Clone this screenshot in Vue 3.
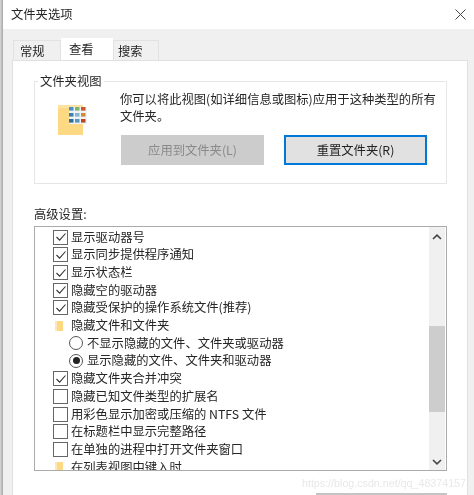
<script setup>
const rows = [
  { type: 'check', on: true, text: '显示驱动器号' },
  { type: 'check', on: true, text: '显示同步提供程序通知' },
  { type: 'check', on: true, text: '显示状态栏' },
  { type: 'check', on: true, text: '隐藏空的驱动器' },
  { type: 'check', on: true, text: '隐藏受保护的操作系统文件(推荐)' },
  { type: 'folder', text: '隐藏文件和文件夹' },
  { type: 'radio', on: false, text: '不显示隐藏的文件、文件夹或驱动器' },
  { type: 'radio', on: true, text: '显示隐藏的文件、文件夹和驱动器' },
  { type: 'check', on: true, text: '隐藏文件夹合并冲突' },
  { type: 'check', on: false, text: '隐藏已知文件类型的扩展名' },
  { type: 'check', on: false, text: '用彩色显示加密或压缩的 NTFS 文件' },
  { type: 'check', on: false, text: '在标题栏中显示完整路径' },
  { type: 'check', on: false, text: '在单独的进程中打开文件夹窗口' },
  { type: 'folder', text: '在列表视图中键入时' },
]
const tiles = [
  [0, 0, '#4a90c8'], [6, 0, '#7fb36a'], [12, 0, '#c8562e'],
  [0, 6, '#3f7fb0'], [6, 6, '#88b4d0'], [12, 6, '#d08a3a'],
  [0, 12, '#2f6f9f'], [6, 12, '#5a94b8'], [12, 12, '#b8482a'],
]
</script>

<template>
  <div class="dialog">
    <div class="edge"></div>
    <div class="main">
      <header class="titlebar">
        <span class="title">文件夹选项</span>
        <svg class="close" width="11" height="11" viewBox="0 0 11 11">
          <path d="M0.5 0.5L10.5 10.5M10.5 0.5L0.5 10.5" stroke="#444" stroke-width="1" fill="none" />
        </svg>
      </header>
      <div class="body">
        <nav class="tabs">
          <span class="tab t1">常规</span>
          <span class="tab active">查看</span>
          <span class="tab t3">搜索</span>
        </nav>
        <section class="panel">
          <fieldset class="group">
            <legend>文件夹视图</legend>
            <svg class="bigfolder" width="30" height="31" viewBox="0 0 30 31">
              <rect x="0" y="1" width="25" height="30" fill="#fcd982" />
              <rect x="0" y="1" width="25" height="3" fill="#fde3a0" />
              <rect x="11" y="3" width="18" height="17" fill="#eef3f6" />
              <rect
                v-for="(t, i) in tiles"
                :key="i"
                :x="11 + t[0]"
                :y="3 + t[1]"
                width="4.5"
                height="3.6"
                :fill="t[2]"
              />
            </svg>
            <div class="group-right">
              <p class="desc">你可以将此视图(如详细信息或图标)应用于这种类型的所有<br />文件夹。</p>
              <div class="buttons">
                <button class="btn disabled" type="button">应用到文件夹(L)</button>
                <button class="btn primary" type="button">重置文件夹(R)</button>
              </div>
            </div>
          </fieldset>
          <div class="adv-label">高级设置:</div>
          <div class="list">
            <div class="rows">
              <div v-for="r in rows" :key="r.text" class="row">
                <span v-if="r.type === 'check'" class="box">
                  <svg v-if="r.on" width="12" height="12" viewBox="0 0 12 12">
                    <path d="M1.5 6L4.6 9.2L10.5 2.5" stroke="#333" stroke-width="1.1" fill="none" />
                  </svg>
                </span>
                <span v-else-if="r.type === 'radio'" class="dot" :class="{ on: r.on }"></span>
                <svg v-else class="tree" width="8" height="10" viewBox="0 0 8 10">
                  <rect width="8" height="10" fill="#fcd982" />
                  <rect width="2" height="10" fill="#fde9b8" />
                </svg>
                <span class="label">{{ r.text }}</span>
              </div>
            </div>
            <div class="scrollbar">
              <svg class="arrow" width="10" height="6" viewBox="0 0 10 6">
                <path d="M1 5L5 1.2L9 5" stroke="#444" stroke-width="1.6" fill="none" />
              </svg>
              <div class="thumb"></div>
              <svg class="arrow down" width="10" height="6" viewBox="0 0 10 6">
                <path d="M1 1L5 4.8L9 1" stroke="#444" stroke-width="1.6" fill="none" />
              </svg>
            </div>
          </div>
          <div class="okbar"></div>
          <span class="watermark">https://blog.csdn.net/qq_48374157</span>
        </section>
      </div>
    </div>
  </div>
</template>

<style>
html, body { margin: 0; background: #fff; }
</style>

<style scoped>
.dialog {
  width: 474px;
  height: 495px;
  display: flex;
  overflow: hidden;
  font-family: "Noto Sans CJK SC", "Liberation Sans", sans-serif;
  font-size: 12.3px;
  color: #262626;
  filter: blur(0.35px);
}
.edge {
  width: 3px;
  flex: none;
  background: linear-gradient(90deg, #d8d8d8, #a8a8a8);
}
.main {
  flex: 1;
  display: flex;
  flex-direction: column;
  min-width: 0;
}
.titlebar {
  height: 29px;
  flex: none;
  display: flex;
  align-items: center;
  justify-content: space-between;
  padding: 0 8px;
  background: #fff;
}
.title { line-height: 29px; }
.body {
  flex: 1;
  background: #f0f0f0;
  padding: 0 6px 0 9px;
  display: flex;
  flex-direction: column;
  min-height: 0;
}
.tabs {
  height: 31px;
  flex: none;
  display: flex;
  align-items: flex-end;
  padding-left: 1px;
}
.tab {
  height: 20px;
  line-height: 20px;
  box-sizing: border-box;
  background: #f0f0f0;
  border: 1px solid #e2e2e2;
  border-bottom: none;
}
.t1 { width: 48px; padding-left: 6px; }
.t3 { width: 46px; padding-left: 4px; }
.active {
  width: 52px;
  height: 23px;
  line-height: 22px;
  padding-left: 8px;
  background: #fff;
  border: none;
  margin-bottom: -1px;
  position: relative;
}
.panel {
  flex: 1;
  background: #fff;
  border: 1px solid #e0e0e0;
  border-bottom: none;
  padding: 12px 20px 0 21px;
  position: relative;
  display: flex;
  flex-direction: column;
  min-height: 0;
}
.group {
  margin: 0;
  height: 111px;
  box-sizing: border-box;
  border: 1px solid #e6e6e6;
  padding: 0;
  display: flex;
  align-items: flex-start;
  min-width: 0;
  flex: none;
}
.group legend {
  padding: 0 2px;
  margin-left: 3px;
  line-height: 16px;
}
.bigfolder {
  flex: none;
  margin: 15px 32px 0 23px;
}
.group-right {
  flex: 1;
  min-width: 0;
  margin-top: 2px;
}
.desc {
  margin: 0;
  line-height: 17px;
  white-space: nowrap;
}
.buttons {
  display: flex;
  gap: 20px;
  margin: 10px 0 0 1px;
}
.btn {
  width: 143px;
  height: 30px;
  font: inherit;
  padding: 0;
  box-sizing: border-box;
}
.disabled {
  background: #cccccc;
  border: 1px solid #cccccc;
  color: #8a8a8a;
}
.primary {
  background: #e1e1e1;
  border: 2px solid #0078d7;
  color: #222;
}
.adv-label {
  margin-top: 21px;
  line-height: 18px;
  flex: none;
}
.list {
  margin-top: 3px;
  height: 245px;
  box-sizing: border-box;
  border: 1px solid #ababab;
  display: flex;
  flex: none;
  overflow: hidden;
}
.rows {
  flex: 1;
  min-width: 0;
  overflow: hidden;
  padding-top: 1.3px;
}
.row {
  height: 17.7px;
  display: flex;
  align-items: center;
  white-space: nowrap;
  padding-left: 18px;
}
.box {
  width: 13px;
  height: 13px;
  border: 1px solid #666;
  flex: none;
  display: flex;
  align-items: center;
  justify-content: center;
  margin-right: 3px;
}
.dot {
  width: 12px;
  height: 12px;
  border: 1px solid #555;
  border-radius: 50%;
  flex: none;
  margin: 0 4px 0 16px;
  position: relative;
}
.dot.on::after {
  content: "";
  position: absolute;
  left: 2.5px;
  top: 2.5px;
  width: 7px;
  height: 7px;
  border-radius: 50%;
  background: #222;
}
.tree {
  flex: none;
  margin: 0 8px 0 2px;
}
.label { line-height: 17px; }
.scrollbar {
  width: 16px;
  flex: none;
  margin-right: 1px;
  background: #f0f0f0;
  display: flex;
  flex-direction: column;
  align-items: center;
}
.arrow { margin-top: 7px; flex: none; }
.arrow.down { margin-top: 47px; }
.thumb {
  width: 100%;
  height: 86px;
  margin-top: 86px;
  background: #cdcdcd;
  flex: none;
}
.okbar {
  position: absolute;
  left: 303px;
  bottom: 0;
  width: 131px;
  height: 2px;
  background: #c4c4c4;
}
.watermark {
  position: absolute;
  right: 1px;
  bottom: 5px;
  font-family: "Liberation Sans", sans-serif;
  font-size: 10.7px;
  line-height: 14px;
  color: #e8e8e8;
}
</style>
